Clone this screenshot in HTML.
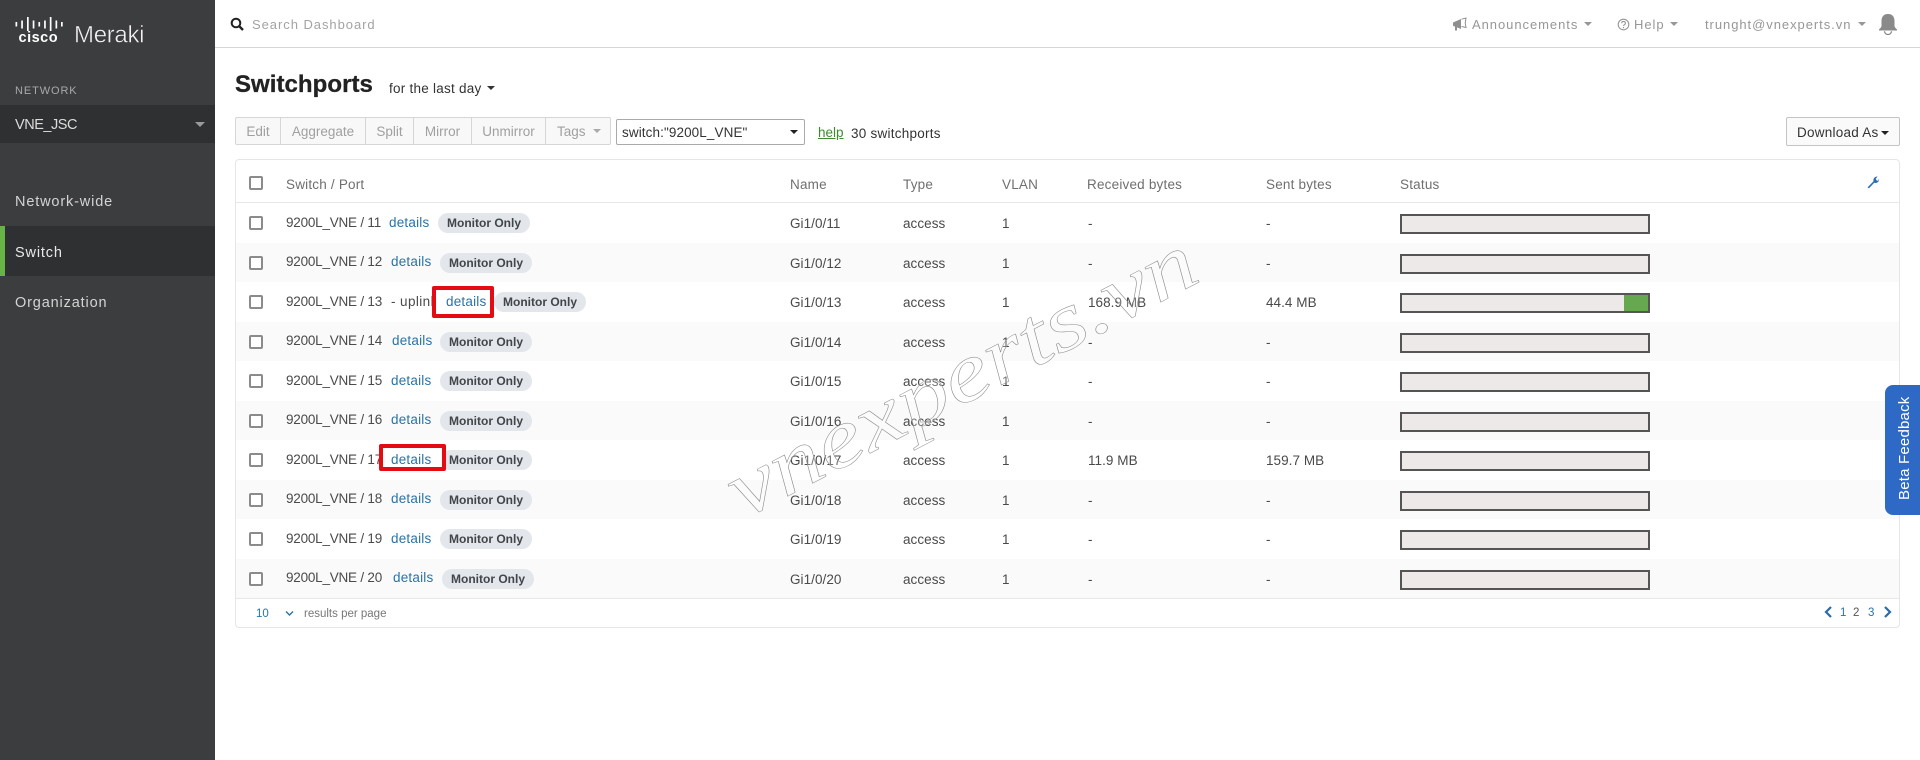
<!DOCTYPE html>
<html><head><meta charset="utf-8"><title>Switchports</title>
<style>
html,body{margin:0;padding:0;width:1920px;height:760px;overflow:hidden;background:#fff;font-family:"Liberation Sans",sans-serif;color:#444}
div,span,a{position:absolute;white-space:nowrap;box-sizing:border-box}
.c{width:14px;height:14px;left:249px;border:2px solid #8b8b8b;border-radius:2px;background:#fff}
.t{font-size:13.5px;line-height:16px;letter-spacing:.05px;color:#4a4a4a;margin-top:1px}
.s{letter-spacing:-.22px}
.h{font-size:13.5px;line-height:16px;top:177px;letter-spacing:.2px;color:#6f6f6f}
.d{font-size:13.5px;line-height:16px;letter-spacing:.2px;color:#2a73a8;margin-top:1px}
.p{height:20px;width:92px;border-radius:10px;background:#e3e6eb;color:#41464b;font-weight:bold;font-size:12px;line-height:21px;text-align:center}
.b{left:1400px;width:250px;height:20px;border:2px solid #555;background:#eee9e9}
.tb{top:117px;height:28px;border:1px solid #d6d6d6;background:#f8f8f8;color:#a0a0a0;font-size:13.5px;line-height:28px;text-align:center}
.n{left:15px;font-size:14.5px;letter-spacing:.85px;line-height:18px;color:#d4d4d4;margin-top:1px}
.top{top:17px;font-size:13px;line-height:16px;letter-spacing:.95px;color:#979797}
.car{width:0;height:0;border-left:4px solid transparent;border-right:4px solid transparent;border-top:4px solid #979797}
.band{left:236px;width:1663px;background:#fafafa}
.f{font-size:11.5px;line-height:14px;top:606px}
</style></head><body>

<div style="left:0;top:0;width:215px;height:760px;background:#3c3d3f"></div>
<svg style="position:absolute;left:0;top:0" width="215" height="50">
<g fill="#fff"><rect x="15.500" y="22" width="1.700" height="4.500"/><rect x="21.200" y="20.500" width="1.700" height="8"/><rect x="27" y="17" width="1.700" height="14"/><rect x="32.700" y="20.500" width="1.700" height="8"/><rect x="38.400" y="22" width="1.700" height="4.500"/><rect x="44.100" y="20.500" width="1.700" height="8"/><rect x="49.800" y="17" width="1.700" height="14"/><rect x="55.500" y="20.500" width="1.700" height="8"/><rect x="61" y="22" width="1.700" height="4.500"/></g>
<text x="18.500" y="42" fill="#fff" font-family="Liberation Sans" font-weight="bold" font-size="14.500" letter-spacing=".5">cisco</text>
<text x="74" y="42.500" fill="#f2f2f2" stroke="#3c3d3f" stroke-width=".45" font-family="Liberation Sans" font-size="24" letter-spacing="-.3">Meraki</text>
</svg>
<div style="left:15px;top:84px;font-size:11px;line-height:14px;letter-spacing:.9px;color:#a9a9a9">NETWORK</div>
<div style="left:0;top:105px;width:215px;height:38px;background:#2f3032"></div>
<div style="left:15px;top:116px;font-size:14.5px;line-height:18px;letter-spacing:-.47px;color:#dcdcdc">VNE_JSC</div>
<div style="left:195px;top:122px;width:0;height:0;border-left:5px solid transparent;border-right:5px solid transparent;border-top:5px solid #9a9a9a"></div>
<div class="n" style="top:192px">Network-wide</div>
<div style="left:0;top:226px;width:215px;height:50px;background:#2f3032"></div>
<div style="left:0;top:226px;width:5px;height:50px;background:#67b346"></div>
<div class="n" style="top:243px;color:#e8e8e8">Switch</div>
<div class="n" style="top:293px">Organization</div>

<div style="left:215px;top:47px;width:1705px;height:1px;background:#d6d6d6"></div>
<svg style="position:absolute;left:230px;top:17px" width="15" height="15" viewBox="0 0 15 15"><circle cx="6" cy="6" r="4.300" fill="none" stroke="#222" stroke-width="2"/><path d="M9.200 9.200l3.800 3.800" stroke="#222" stroke-width="2.400"/></svg>
<div class="top" style="left:252px;color:#a3a3a3">Search Dashboard</div>
<svg style="position:absolute;left:1452px;top:17px" width="16" height="15" viewBox="0 0 16 15"><path d="M1 5.500l8-3.500v10l-4-1.600v3.100H3V9.600L1 8.800z" fill="#8f8f8f"/><path d="M9.500 2.200l4.500-1.200-.8 5 .8 4.500-4.500-1" fill="none" stroke="#8f8f8f" stroke-width="1"/></svg>
<div class="top" style="left:1472px">Announcements</div>
<div class="car" style="left:1584px;top:22px"></div>
<svg style="position:absolute;left:1617px;top:18px" width="13" height="13" viewBox="0 0 13 13"><circle cx="6.500" cy="6.500" r="5.300" fill="none" stroke="#979797" stroke-width="1.100"/><path d="M4.700 5.200c0-2.300 3.700-2.300 3.700 0 0 1.500-1.900 1.400-1.900 2.800" fill="none" stroke="#979797" stroke-width="1.100"/><rect x="5.900" y="9" width="1.200" height="1.200" fill="#979797"/></svg>
<div class="top" style="left:1634px">Help</div>
<div class="car" style="left:1670px;top:22px"></div>
<div class="top" style="left:1705px">trunght@vnexperts.vn</div>
<div class="car" style="left:1858px;top:22px"></div>
<svg style="position:absolute;left:1878px;top:13px" width="20" height="22" viewBox="0 0 20 22"><path d="M10 1c4.500 0 6.500 3 6.500 7v5c0 1 1.500 2.500 2.500 3.500v1H1v-1C2 15.500 3.500 14 3.500 13V8C3.500 4 5.500 1 10 1z" fill="#8a8a8a"/><path d="M6.500 18.300a3.500 3.200 0 0 0 7 0" fill="none" stroke="#8a8a8a" stroke-width="1.300"/></svg>

<div style="left:235px;top:71px;font-size:24px;line-height:28px;font-weight:bold;letter-spacing:.05px;color:#222;-webkit-text-stroke:.3px #222">Switchports</div>
<div style="left:389px;top:81px;font-size:13.5px;line-height:16px;letter-spacing:.25px;color:#333">for the last day</div>
<div style="left:487px;top:86px;width:0;height:0;border-left:4px solid transparent;border-right:4px solid transparent;border-top:4px solid #333"></div>

<div class="tb" style="left:235px;width:46px;border-radius:2px 0 0 2px">Edit</div>
<div class="tb" style="left:280px;width:86px">Aggregate</div>
<div class="tb" style="left:365px;width:49px">Split</div>
<div class="tb" style="left:413px;width:59px">Mirror</div>
<div class="tb" style="left:471px;width:75px">Unmirror</div>
<div class="tb" style="left:545px;width:66px;text-align:left;padding-left:11px;border-radius:0 2px 2px 0">Tags</div>
<div style="left:593px;top:129px;width:0;height:0;border-left:4px solid transparent;border-right:4px solid transparent;border-top:4px solid #aaa"></div>
<div style="left:616px;top:119px;width:189px;height:26px;border:1px solid #aaa;border-radius:2px;background:#fff;font-size:13.5px;line-height:25px;padding-left:5px;letter-spacing:.1px;color:#333">switch:"9200L_VNE"</div>
<div style="left:790px;top:130px;width:0;height:0;border-left:4px solid transparent;border-right:4px solid transparent;border-top:4px solid #222"></div>
<div style="left:818px;top:125px;font-size:13.5px;line-height:16px;color:#3f8a2e;text-decoration:underline">help</div>
<div style="left:851px;top:126px;font-size:13.5px;line-height:16px;letter-spacing:.25px;color:#333">30 switchports</div>
<div style="left:1786px;top:117px;width:114px;height:29px;border:1px solid #c4c4c4;border-radius:2px;background:#fafafa;font-size:13.5px;line-height:29px;padding-left:10px;letter-spacing:.25px;color:#333">Download As</div>
<div style="left:1881px;top:131px;width:0;height:0;border-left:4px solid transparent;border-right:4px solid transparent;border-top:4px solid #222"></div>

<div style="left:235px;top:159px;width:1665px;height:469px;border:1px solid #e6e6e6;border-radius:4px;background:#fff"></div>
<div class="band" style="top:243px;height:39px"></div>
<div class="band" style="top:322px;height:39px"></div>
<div class="band" style="top:401px;height:39px"></div>
<div class="band" style="top:480px;height:39px"></div>
<div class="band" style="top:559px;height:39px"></div>
<div style="left:236px;top:202px;width:1663px;height:1px;background:#e8e8e8"></div>
<div style="left:236px;top:598px;width:1663px;height:1px;background:#e8e8e8"></div>

<div class="c" style="top:176px"></div>
<div class="h" style="left:286px">Switch / Port</div>
<div class="h" style="left:790px">Name</div>
<div class="h" style="left:903px">Type</div>
<div class="h" style="left:1002px">VLAN</div>
<div class="h" style="left:1087px">Received bytes</div>
<div class="h" style="left:1266px">Sent bytes</div>
<div class="h" style="left:1400px">Status</div>
<svg style="position:absolute;left:1866px;top:175px" width="14" height="14" viewBox="0 0 14 14"><path d="M1.500 12.500L7.500 6.200C7 4 8.500 1.500 11.500 1.500L9.800 3.800l.8 1.700 1.700.3L13 3.500c.6 3-2 5.200-4.800 4.300L3 13.200z" fill="#2a6cb0"/></svg>

<div class="c" style="top:216px"></div><div class="t s" style="left:286px;top:214px">9200L_VNE / 11</div><a class="d" style="left:389px;top:214px">details</a><div class="p" style="left:438px;top:213px">Monitor Only</div><div class="t" style="left:790px;top:215px">Gi1/0/11</div><div class="t" style="left:903px;top:215px">access</div><div class="t" style="left:1002px;top:215px">1</div><div class="t" style="left:1088px;top:215px">-</div><div class="t" style="left:1266px;top:215px">-</div><div class="b" style="top:214px"></div>

<div class="c" style="top:256px"></div><div class="t s" style="left:286px;top:253px">9200L_VNE / 12</div><a class="d" style="left:391px;top:253px">details</a><div class="p" style="left:440px;top:253px">Monitor Only</div><div class="t" style="left:790px;top:255px">Gi1/0/12</div><div class="t" style="left:903px;top:255px">access</div><div class="t" style="left:1002px;top:255px">1</div><div class="t" style="left:1088px;top:255px">-</div><div class="t" style="left:1266px;top:255px">-</div><div class="b" style="top:254px"></div>

<div class="c" style="top:295px"></div><div class="t s" style="left:286px;top:293px">9200L_VNE / 13</div><div class="t" style="left:391px;top:293px;letter-spacing:.4px">- uplink</div><div class="p" style="left:494px;top:292px">Monitor Only</div><div class="t" style="left:790px;top:294px">Gi1/0/13</div><div class="t" style="left:903px;top:294px">access</div><div class="t" style="left:1002px;top:294px">1</div><div class="t" style="left:1088px;top:294px">168.9 MB</div><div class="t" style="left:1266px;top:294px">44.4 MB</div><div class="b" style="top:293px"><div style="right:0;top:0;width:24px;height:16px;background:#65a84f"></div></div>
<div style="left:432px;top:286px;width:62px;height:32px;border:4px solid #e40c12;border-radius:2px;background:#fff"></div><a class="d" style="left:446px;top:293px">details</a>

<div class="c" style="top:335px"></div><div class="t s" style="left:286px;top:332px">9200L_VNE / 14</div><a class="d" style="left:392px;top:332px">details</a><div class="p" style="left:440px;top:332px">Monitor Only</div><div class="t" style="left:790px;top:334px">Gi1/0/14</div><div class="t" style="left:903px;top:334px">access</div><div class="t" style="left:1002px;top:334px">1</div><div class="t" style="left:1088px;top:334px">-</div><div class="t" style="left:1266px;top:334px">-</div><div class="b" style="top:333px"></div>

<div class="c" style="top:374px"></div><div class="t s" style="left:286px;top:372px">9200L_VNE / 15</div><a class="d" style="left:391px;top:372px">details</a><div class="p" style="left:440px;top:371px">Monitor Only</div><div class="t" style="left:790px;top:373px">Gi1/0/15</div><div class="t" style="left:903px;top:373px">access</div><div class="t" style="left:1002px;top:373px">1</div><div class="t" style="left:1088px;top:373px">-</div><div class="t" style="left:1266px;top:373px">-</div><div class="b" style="top:372px"></div>

<div class="c" style="top:414px"></div><div class="t s" style="left:286px;top:411px">9200L_VNE / 16</div><a class="d" style="left:391px;top:411px">details</a><div class="p" style="left:440px;top:411px">Monitor Only</div><div class="t" style="left:790px;top:413px">Gi1/0/16</div><div class="t" style="left:903px;top:413px">access</div><div class="t" style="left:1002px;top:413px">1</div><div class="t" style="left:1088px;top:413px">-</div><div class="t" style="left:1266px;top:413px">-</div><div class="b" style="top:412px"></div>

<div class="c" style="top:453px"></div><div class="t s" style="left:286px;top:451px">9200L_VNE / 17</div><div class="p" style="left:440px;top:450px">Monitor Only</div><div class="t" style="left:790px;top:452px">Gi1/0/17</div><div class="t" style="left:903px;top:452px">access</div><div class="t" style="left:1002px;top:452px">1</div><div class="t" style="left:1088px;top:452px">11.9 MB</div><div class="t" style="left:1266px;top:452px">159.7 MB</div><div class="b" style="top:451px"></div>
<div style="left:379px;top:444px;width:67px;height:27px;border:4px solid #e40c12;border-radius:2px;background:#fff"></div><a class="d" style="left:391px;top:451px">details</a>

<div class="c" style="top:493px"></div><div class="t s" style="left:286px;top:490px">9200L_VNE / 18</div><a class="d" style="left:391px;top:490px">details</a><div class="p" style="left:440px;top:490px">Monitor Only</div><div class="t" style="left:790px;top:492px">Gi1/0/18</div><div class="t" style="left:903px;top:492px">access</div><div class="t" style="left:1002px;top:492px">1</div><div class="t" style="left:1088px;top:492px">-</div><div class="t" style="left:1266px;top:492px">-</div><div class="b" style="top:491px"></div>

<div class="c" style="top:532px"></div><div class="t s" style="left:286px;top:530px">9200L_VNE / 19</div><a class="d" style="left:391px;top:530px">details</a><div class="p" style="left:440px;top:529px">Monitor Only</div><div class="t" style="left:790px;top:531px">Gi1/0/19</div><div class="t" style="left:903px;top:531px">access</div><div class="t" style="left:1002px;top:531px">1</div><div class="t" style="left:1088px;top:531px">-</div><div class="t" style="left:1266px;top:531px">-</div><div class="b" style="top:530px"></div>

<div class="c" style="top:572px"></div><div class="t s" style="left:286px;top:569px">9200L_VNE / 20</div><a class="d" style="left:393px;top:569px">details</a><div class="p" style="left:442px;top:569px">Monitor Only</div><div class="t" style="left:790px;top:571px">Gi1/0/20</div><div class="t" style="left:903px;top:571px">access</div><div class="t" style="left:1002px;top:571px">1</div><div class="t" style="left:1088px;top:571px">-</div><div class="t" style="left:1266px;top:571px">-</div><div class="b" style="top:570px"></div>

<div class="f" style="left:256px;top:607px;color:#2a73a8">10</div>
<svg style="position:absolute;left:285px;top:610px" width="9" height="7" viewBox="0 0 9 7"><path d="M1 1.500l3.500 3.500L8 1.500" fill="none" stroke="#2a73a8" stroke-width="1.400"/></svg>
<div class="f" style="left:304px;top:607px;color:#777">results per page</div>
<svg style="position:absolute;left:1824px;top:606px" width="9" height="12" viewBox="0 0 9 12"><path d="M7 1L2 6l5 5" fill="none" stroke="#2a6ca8" stroke-width="2.200"/></svg>
<div class="f" style="left:1840px;color:#2a73a8">1</div>
<div class="f" style="left:1853px;color:#555">2</div>
<div class="f" style="left:1868px;color:#2a73a8">3</div>
<svg style="position:absolute;left:1883px;top:606px" width="9" height="12" viewBox="0 0 9 12"><path d="M2 1l5 5-5 5" fill="none" stroke="#2a6ca8" stroke-width="2.200"/></svg>

<div style="left:1885px;top:385px;width:35px;height:130px;background:#2e69c5;border-radius:8px 0 0 8px"></div>
<svg style="position:absolute;left:1885px;top:385px" width="35" height="130"><text transform="translate(24 115) rotate(-90)" fill="#fff" font-family="Liberation Sans" font-size="15" letter-spacing=".2">Beta Feedback</text></svg>

<svg style="position:absolute;left:700px;top:220px" width="560" height="320"><text transform="translate(44 299) rotate(-27.500) scale(1.020 .82)" fill="#ffffff" fill-opacity=".25" stroke="#8f8f8f" stroke-width=".65" font-family="Liberation Serif" font-style="italic" font-size="101">vnexperts.vn</text></svg>
</body></html>
